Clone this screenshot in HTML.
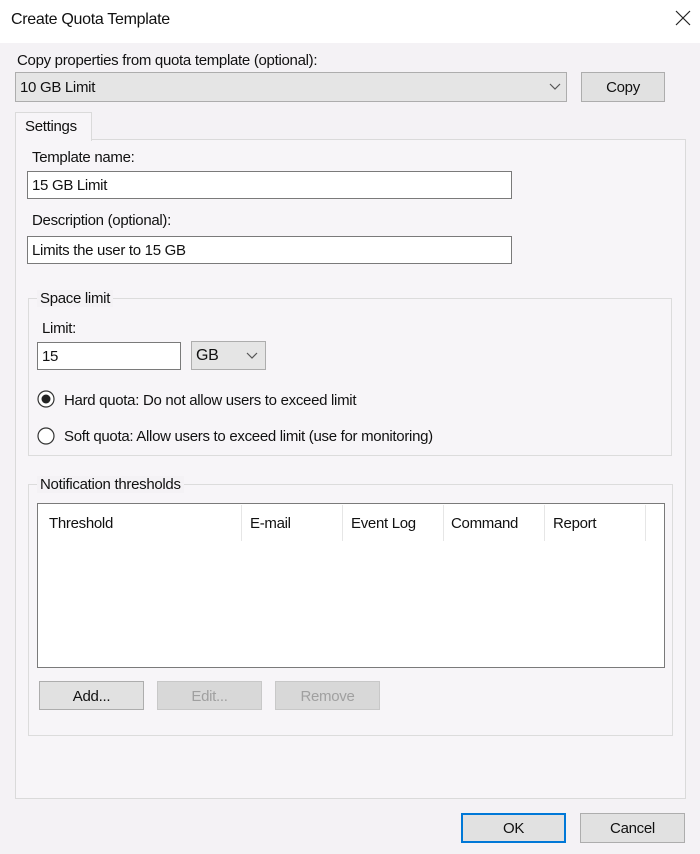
<!DOCTYPE html>
<html><head><style>
body{margin:0;width:700px;height:854px;background:#f4f2f5;font-family:"Liberation Sans",sans-serif;font-size:15px;color:#111;position:relative;overflow:hidden;letter-spacing:-0.3px}
div{position:absolute;box-sizing:border-box}
.t{white-space:nowrap}
.box{background:#fff;border:1px solid #7a7a7a;padding:5px 0 0 4px}
.btn{background:#e1e1e1;border:1px solid #adadad;text-align:center;line-height:29px}
.dis{color:#a0a0a0;background:#d8d8d8;border-color:#c8c8c8}
.grp{border:1px solid #dcdcdc}
.lbl{background:#f4f2f5;padding:0 3px}
.sep{top:1px;width:1px;height:36px;background:#e6e6e6}
</style></head><body>
<div style="left:0;top:0;width:700px;height:43px;background:#fff"></div>
<div class="t" style="left:11px;top:11px;font-size:16px">Create Quota Template</div>
<svg style="position:absolute;left:675px;top:10px" width="16" height="16"><path d="M1 1L15 15M15 1L1 15" stroke="#222" stroke-width="1.2"/></svg>
<div class="t" style="left:17px;top:52px">Copy properties from quota template (optional):</div>
<div style="left:15px;top:72px;width:552px;height:30px;background:#e5e5e5;border:1px solid #adadad"></div>
<div class="t" style="left:20px;top:79px">10 GB Limit</div>
<svg style="position:absolute;left:549px;top:83px" width="12" height="8"><path d="M1 1l5 5 5-5" stroke="#555" fill="none" stroke-width="1.2"/></svg>
<div class="btn" style="left:581px;top:72px;width:84px;height:30px">Copy</div>
<div style="left:15px;top:139px;width:671px;height:660px;background:#f7f5f8;border:1px solid #dadada"></div>
<div style="left:15px;top:112px;width:77px;height:29px;background:#f7f5f8;border:1px solid #dadada;border-bottom:none"></div>
<div class="t" style="left:25px;top:118px">Settings</div>
<div class="t" style="left:32px;top:149px">Template name:</div>
<div class="box" style="left:27px;top:171px;width:485px;height:28px">15 GB Limit</div>
<div class="t" style="left:32px;top:212px">Description (optional):</div>
<div class="box" style="left:27px;top:236px;width:485px;height:28px">Limits the user to 15 GB</div>
<div class="grp" style="left:28px;top:298px;width:644px;height:158px"></div>
<div class="t lbl" style="left:37px;top:290px">Space limit</div>
<div class="t" style="left:42px;top:320px">Limit:</div>
<div class="box" style="left:37px;top:342px;width:144px;height:28px">15</div>
<div style="left:191px;top:341px;width:75px;height:29px;background:#e5e5e5;border:1px solid #adadad"></div>
<div class="t" style="left:196px;top:347px;font-size:16px">GB</div>
<svg style="position:absolute;left:246px;top:352px" width="12" height="8"><path d="M1 1l5 5 5-5" stroke="#555" fill="none" stroke-width="1.2"/></svg>
<svg style="position:absolute;left:37px;top:390px" width="18" height="18"><circle cx="9" cy="9" r="8" fill="#fff" stroke="#333" stroke-width="1.2"/><circle cx="9" cy="9" r="4.5" fill="#222"/></svg>
<div class="t" style="left:64px;top:392px">Hard quota: Do not allow users to exceed limit</div>
<svg style="position:absolute;left:37px;top:427px" width="18" height="18"><circle cx="9" cy="9" r="8" fill="#fff" stroke="#333" stroke-width="1.2"/></svg>
<div class="t" style="left:64px;top:428px">Soft quota: Allow users to exceed limit (use for monitoring)</div>
<div class="grp" style="left:28px;top:484px;width:645px;height:252px"></div>
<div class="t lbl" style="left:37px;top:476px">Notification thresholds</div>
<div style="left:37px;top:503px;width:628px;height:165px;background:#fff;border:1px solid #7a7a7a">
<div class="sep" style="left:203px"></div><div class="sep" style="left:304px"></div><div class="sep" style="left:405px"></div><div class="sep" style="left:506px"></div><div class="sep" style="left:607px"></div>
<div class="t" style="left:11px;top:11px">Threshold</div>
<div class="t" style="left:212px;top:11px">E-mail</div>
<div class="t" style="left:313px;top:11px">Event Log</div>
<div class="t" style="left:413px;top:11px">Command</div>
<div class="t" style="left:515px;top:11px">Report</div>
</div>
<div class="btn" style="left:39px;top:681px;width:105px;height:29px">Add...</div>
<div class="btn dis" style="left:157px;top:681px;width:105px;height:29px">Edit...</div>
<div class="btn dis" style="left:275px;top:681px;width:105px;height:29px">Remove</div>
<div class="btn" style="left:461px;top:813px;width:105px;height:30px;border:2px solid #0078d7;line-height:28px">OK</div>
<div class="btn" style="left:580px;top:813px;width:105px;height:30px;line-height:30px">Cancel</div>
</body></html>
